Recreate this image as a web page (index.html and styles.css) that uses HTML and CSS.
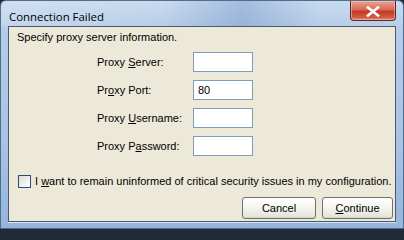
FILE: index.html
```html
<!DOCTYPE html>
<html>
<head>
<meta charset="utf-8">
<link rel="stylesheet" href="styles.css">
</head>
<body>
<div class="window">
  <div class="titlebar">
    <span class="title">Connection Failed</span>
    <div class="close">
      <svg width="14" height="11" viewBox="0 0 14 11"><path d="M2 1.5 L12 9.5 M12 1.5 L2 9.5" stroke="#ffffff" stroke-width="2.6" stroke-linecap="square"/></svg>
    </div>
  </div>
  <div class="panel">
    <div class="intro">Specify proxy server information.</div>
    <div class="form">
      <label>Proxy <u>S</u>erver:</label><div class="input"></div>
      <label>Pr<u>o</u>xy Port:</label><div class="input">80</div>
      <label>Proxy <u>U</u>sername:</label><div class="input"></div>
      <label>Proxy P<u>a</u>ssword:</label><div class="input"></div>
    </div>
    <div class="check">
      <span class="box"></span>
      <span>I <u>w</u>ant to remain uninformed of critical security issues in my configuration.</span>
    </div>
    <div class="buttons">
      <div class="btn cancel">Cancel</div>
      <div class="btn cont"><u>C</u>ontinue</div>
    </div>
  </div>
</div>
</body>
</html>
```
FILE: styles.css
```css
html, body { margin: 0; padding: 0; }
body { width: 404px; height: 229px; overflow: hidden; background: #1f2a36; }
.window {
  width: 404px; height: 229px; box-sizing: border-box;
  display: flex; flex-direction: column;
  background: linear-gradient(180deg, #c9dbee 0%, #b6cde8 12%, #a9c3e3 60%, #95b5dd 100%);
  border: 1px solid #4f6d8f;
  border-radius: 6px 6px 0 0;
  padding: 0 7px 6px 7px;
}
.titlebar {
  height: 28px; display: flex; align-items: flex-start; justify-content: space-between;
  background: linear-gradient(90deg, rgba(255,255,255,0.15) 0%, rgba(255,255,255,0) 40%, rgba(60,100,170,0.25) 60%, rgba(255,255,255,0) 80%);
  margin: 0 -7px; padding: 0 7px 0 8px;
}
.title {
  font-family: "Open Sans", "Noto Sans", sans-serif; font-size: 11.4px; color: #000;
  margin-top: 8px; letter-spacing: 0;
}
.close {
  width: 46px; height: 20px; margin-right: 0; box-sizing: border-box;
  border: 1px solid #5a2620; border-top: none; border-radius: 0 0 4px 4px;
  background: linear-gradient(180deg, #e9a393 0%, #d86b58 45%, #c23b24 55%, #cf5a41 85%, #e08c72 100%);
  display: flex; align-items: center; justify-content: center;
  box-shadow: inset 0 0 0 1px rgba(255,210,200,0.5);
}
.close svg { display: block; margin-top: 1px; }
.panel {
  flex: 1; background: #ece9d8; border: 1px solid #4a5a6e;
  display: flex; flex-direction: column;
  font-family: "Liberation Sans", Arial, sans-serif; font-size: 11px; color: #000;
  padding: 3px 2px 2px 8px;
  box-shadow: 0 1px 0 #d6e4f4;
}
.intro { line-height: 14px; }
.form {
  display: grid; grid-template-columns: 96px 60px; row-gap: 8px;
  margin: 8px 0 0 80px; align-items: center;
}
.form label { line-height: 14px; }
.input {
  height: 20px; box-sizing: border-box; background: #fff;
  border: 1px solid #7f9db9; line-height: 18px; padding-left: 4px;
}
.check { display: flex; align-items: center; margin-top: 18px; gap: 4px; line-height: 14px; }
.box {
  width: 13px; height: 13px; box-sizing: border-box; margin-left: 1px;
  border: 1px solid #1c5180; background: linear-gradient(135deg, #dcdcd4 0%, #f6f6f2 70%, #ffffff 100%);
}
.buttons { display: flex; justify-content: flex-end; gap: 6px; margin-top: 9px; padding-right: 0; }
.btn {
  height: 22px; box-sizing: border-box; border: 1px solid #707070; border-radius: 3px;
  background: linear-gradient(180deg, #ffffff 0%, #f4f4f0 50%, #e6e5dc 90%, #d6d4c8 100%);
  display: flex; align-items: center; justify-content: center; line-height: 14px;
}
.cancel { width: 74px; }
.cont { width: 71px; }
u { text-decoration: underline; text-underline-offset: 1px; }
```
